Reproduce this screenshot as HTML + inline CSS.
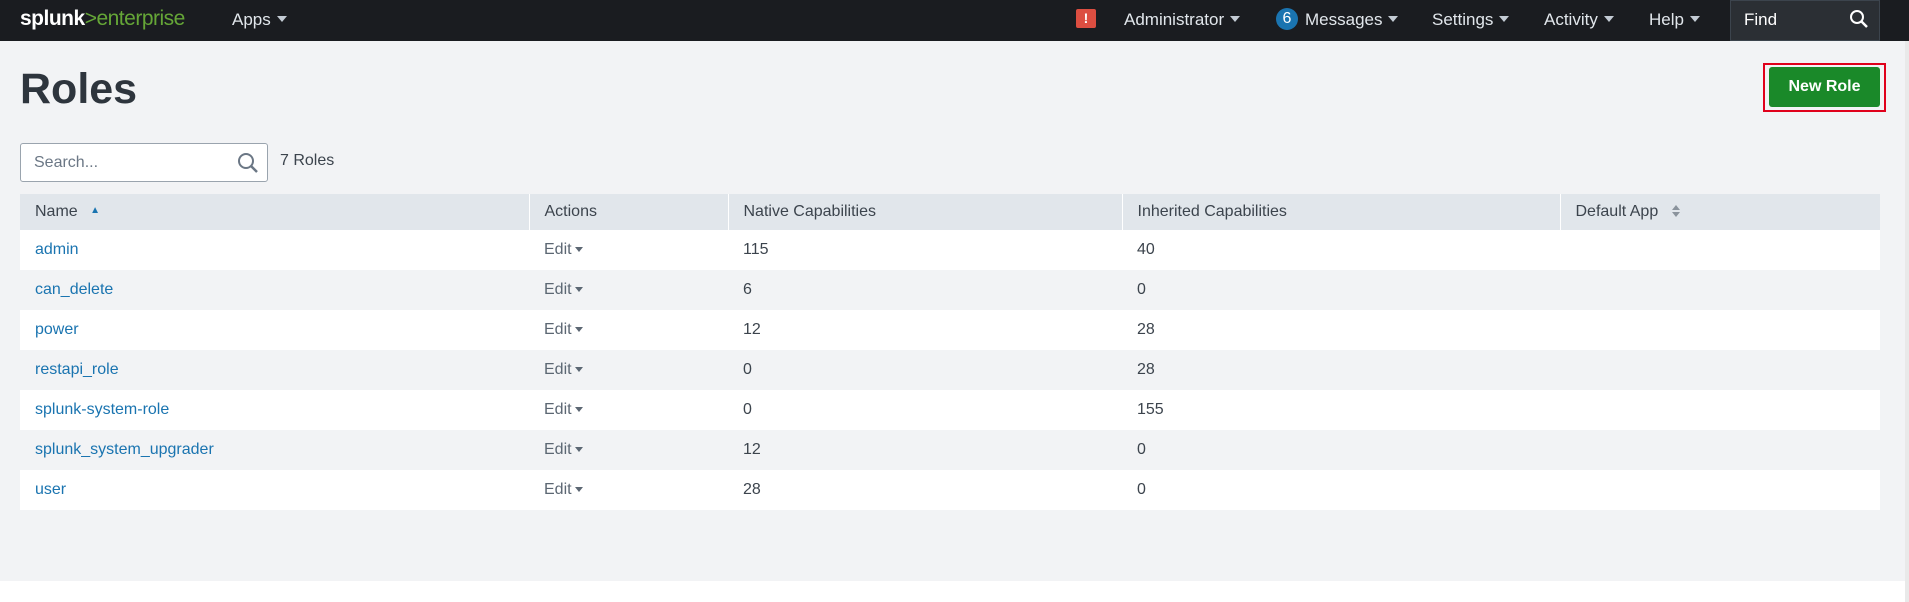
<!DOCTYPE html>
<html><head><meta charset="utf-8"><style>
*{box-sizing:border-box;margin:0;padding:0}
body{width:1909px;height:602px;overflow:hidden;background:#fff;font-family:"Liberation Sans",sans-serif;color:#3c444d;position:relative}
.nav{position:absolute;left:0;top:0;width:1909px;height:41px;background:#1a1c20;color:#e1e6eb;font-size:17px}
.nav span{position:absolute;top:10px}
.car{display:inline-block;width:0;height:0;border-left:5px solid transparent;border-right:5px solid transparent;border-top:6px solid #c3cbd4;margin-left:6px;vertical-align:3px}
.main{position:absolute;left:0;top:41px;width:1905px;height:540px;background:#f2f3f5}
.sb{position:absolute;right:0;top:41px;width:4px;height:561px;background:#e9e9e9}
h1{position:absolute;left:20px;top:65px;font-size:43px;font-weight:bold;color:#2e353d}
.search{position:absolute;left:20px;top:143px;width:248px;height:39px;border:1px solid #9aa4ae;border-radius:3px;background:#fff;font-size:16px;color:#6b7785;padding:10px 13px}
table{position:absolute;left:20px;top:194px;width:1860px;border-collapse:collapse;font-size:16px}
th{height:36px;background:#e1e6eb;font-weight:normal;text-align:left;padding-left:15px;border-left:1px solid #fff}
th:first-child{border-left:none}
td{height:40px;padding-left:15px}
tr:nth-child(even) td{background:#fff}
tr:nth-child(odd) td{background:#f2f3f5}
td a{color:#1a74b0;text-decoration:none}
.ed{color:#5c6773}
.ec{display:inline-block;border-left:4px solid transparent;border-right:4px solid transparent;border-top:5px solid #5c6773;margin-left:3px;vertical-align:2px}
</style></head><body>
<div class="nav">
<div style="position:absolute;left:20px;top:7px;font-size:21px;letter-spacing:-0.5px;white-space:nowrap"><b style="color:#fff">splunk</b><b style="color:#65a637;font-weight:normal">&gt;enterprise</b></div>
<span style="left:232px">Apps<i class="car"></i></span>
<div style="position:absolute;left:1076px;top:9px;width:20px;height:19px;background:#dc4e41;border-radius:2px;color:#fff;font-weight:bold;font-size:14px;text-align:center;line-height:19px">!</div>
<span style="left:1124px">Administrator<i class="car"></i></span>
<div style="position:absolute;left:1276px;top:8px;width:22px;height:22px;border-radius:11px;background:#1a74b0;color:#fff;font-size:16px;text-align:center;line-height:22px">6</div>
<span style="left:1305px">Messages<i class="car"></i></span>
<span style="left:1432px">Settings<i class="car"></i></span>
<span style="left:1544px">Activity<i class="car"></i></span>
<span style="left:1649px">Help<i class="car"></i></span>
<div style="position:absolute;left:1730px;top:0;width:150px;height:41px;background:#2b2f34;border:1px solid #3c444d"></div>
<span style="left:1744px;color:#fff">Find</span>
<svg style="position:absolute;left:1849px;top:9px" width="20" height="20" viewBox="0 0 20 20"><circle cx="8" cy="8" r="6" fill="none" stroke="#fff" stroke-width="2"/><path d="M12.5 12.5L18 18" stroke="#fff" stroke-width="2.5"/></svg>
</div>
<div class="main"></div>
<div class="sb"></div>
<h1>Roles</h1>
<div style="position:absolute;left:1763px;top:63px;width:123px;height:49px;border:2px solid #e0001b"></div>
<div style="position:absolute;left:1769px;top:67px;width:111px;height:40px;background:#1a8929;border-radius:3px;color:#fff;font-weight:bold;font-size:16px;text-align:center;line-height:40px">New Role</div>
<div class="search">Search...</div>
<svg style="position:absolute;left:236px;top:151px" width="24" height="24" viewBox="0 0 24 24"><circle cx="10" cy="10" r="7" fill="none" stroke="#6b7785" stroke-width="2"/><path d="M15 15L21 21" stroke="#6b7785" stroke-width="2.5"/></svg>
<div style="position:absolute;left:280px;top:152px;font-size:16px">7 Roles</div>
<table>
<tr><th style="width:509px">Name <span style="color:#1a74b0;font-size:10px;margin-left:8px;vertical-align:3px">▲</span></th><th style="width:199px">Actions</th><th style="width:394px">Native Capabilities</th><th style="width:438px">Inherited Capabilities</th><th>Default App <svg width="10" height="14" viewBox="0 0 10 14" style="margin-left:8px;vertical-align:-2px"><path d="M5 1L9 6H1Z M5 13L9 8H1Z" fill="#8a939c"/></svg></th></tr>
<tr><td><a>admin</a></td><td class="ed">Edit<i class="ec"></i></td><td>115</td><td>40</td><td></td></tr>
<tr><td><a>can_delete</a></td><td class="ed">Edit<i class="ec"></i></td><td>6</td><td>0</td><td></td></tr>
<tr><td><a>power</a></td><td class="ed">Edit<i class="ec"></i></td><td>12</td><td>28</td><td></td></tr>
<tr><td><a>restapi_role</a></td><td class="ed">Edit<i class="ec"></i></td><td>0</td><td>28</td><td></td></tr>
<tr><td><a>splunk-system-role</a></td><td class="ed">Edit<i class="ec"></i></td><td>0</td><td>155</td><td></td></tr>
<tr><td><a>splunk_system_upgrader</a></td><td class="ed">Edit<i class="ec"></i></td><td>12</td><td>0</td><td></td></tr>
<tr><td><a>user</a></td><td class="ed">Edit<i class="ec"></i></td><td>28</td><td>0</td><td></td></tr>
</table>
</body></html>
